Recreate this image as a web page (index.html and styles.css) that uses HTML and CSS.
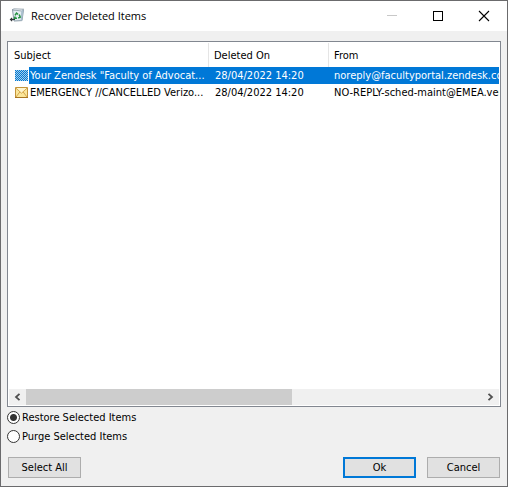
FILE: index.html
```html
<!DOCTYPE html>
<html lang="en">
<head>
<meta charset="utf-8">
<title>Recover Deleted Items</title>
<link rel="stylesheet" href="styles.css">
</head>
<body>
<main class="window">
  <header class="titlebar">
    <svg class="app-icon" viewBox="0 0 16 16" aria-hidden="true">
      <path d="M3.5 1.8 14.5 1.8 13 12.6 5 13z" fill="#e4edf2" stroke="#8b9ba7"/>
      <path d="M3 1.8 5 .8 14.6 1.2 12.5 3z" fill="#f8fbfd" stroke="#8b9ba7" stroke-width=".8"/>
      <path d="M12.3 3 14.5 1.8 13 12.6 11.5 12.8z" fill="#a9bfce"/>
      <path d="M6 7.4 7.5 5.2 9 6.4M10.2 6.6 11.2 9.2 9.2 10M8 10.2H5.6L6.2 8.4" fill="none" stroke="#24913f" stroke-width="1.5"/>
      <path d="M6 11.5H1.5M3.2 9.8 1.5 11.5 3.2 13.2" fill="none" stroke="#30363a" stroke-width="1.2"/>
    </svg>
    <h1 class="title">Recover Deleted Items</h1>
    <button class="caption" type="button" aria-label="Minimize" disabled>
      <svg viewBox="0 0 12 12" shape-rendering="crispEdges"><path d="M1 5.5H11" stroke="#c8c8c8"/></svg>
    </button>
    <button class="caption" type="button" aria-label="Maximize">
      <svg viewBox="0 0 12 12" shape-rendering="crispEdges"><path d="M1.5 1.5H10.5V10.5H1.5z" fill="none" stroke="#000"/></svg>
    </button>
    <button class="caption" type="button" aria-label="Close">
      <svg viewBox="0 0 12 12"><path d="M1 1 11 11M11 1 1 11" stroke="#000" stroke-width="1.1"/></svg>
    </button>
  </header>
  <form class="content">
    <section class="list">
      <table class="items">
        <colgroup><col class="col-subject"><col class="col-date"><col></colgroup>
        <thead>
          <tr><th>Subject</th><th>Deleted On</th><th>From</th></tr>
        </thead>
        <tbody>
          <tr class="selected">
            <td><div class="subject">
              <svg class="mail" viewBox="0 0 13 11" aria-hidden="true">
                <path d="M0 0h13v11H0z" fill="#a8cfe6"/>
                <path d="M0 .5h13M0 2.5h13M0 4.5h13M0 6.5h13M0 8.5h13M0 10.5h13" stroke="#0078d7" stroke-dasharray="1 1"/>
                <path d="M1 1.5h12M1 3.5h12M1 5.5h12M1 7.5h12M1 9.5h12" stroke="#0078d7" stroke-dasharray="1 1"/>
              </svg>
              <span class="text">Your Zendesk "Faculty of Advocat...</span>
            </div></td>
            <td>28/04/2022 14:20</td>
            <td>noreply@facultyportal.zendesk.co</td>
          </tr>
          <tr>
            <td><div class="subject">
              <svg class="mail" viewBox="0 0 13 11" aria-hidden="true">
                <path d="M.5.5h12v10H.5z" fill="#fbe69a" stroke="#c4943a"/>
                <path d="M1 1h11L6.5 6.2z" fill="#fff6cf"/>
                <path d="M1 1.2 6.5 6.2 12 1.2M1 10 4.8 5M12 10 8.2 5" fill="none" stroke="#cf9f45" stroke-width=".9"/>
                <path d="M0 10.5h13" stroke="#a87522"/>
              </svg>
              <span class="text">EMERGENCY //CANCELLED Verizo...</span>
            </div></td>
            <td>28/04/2022 14:20</td>
            <td>NO-REPLY-sched-maint@EMEA.ver</td>
          </tr>
        </tbody>
      </table>
      <div class="scrollbar">
        <button class="arrow" type="button" aria-label="Scroll left"><svg viewBox="0 0 7 8"><path d="M5.5.8 2 4 5.5 7.2" fill="none" stroke="#505050" stroke-width="1.8"/></svg></button>
        <div class="track"><div class="thumb"></div></div>
        <button class="arrow" type="button" aria-label="Scroll right"><svg viewBox="0 0 7 8"><path d="M1.5.8 5 4 1.5 7.2" fill="none" stroke="#505050" stroke-width="1.8"/></svg></button>
      </div>
    </section>
    <div class="options">
      <label class="option"><input type="radio" name="action" checked>Restore Selected Items</label>
      <label class="option"><input type="radio" name="action">Purge Selected Items</label>
    </div>
    <footer class="actions">
      <button class="button" type="button">Select All</button>
      <span class="spacer"></span>
      <button class="button primary" type="button">Ok</button>
      <button class="button" type="button">Cancel</button>
    </footer>
  </form>
</main>
</body>
</html>
```
FILE: styles.css
```css
* {
  box-sizing: border-box;
}

body {
  margin: 0;
  font: 11px/17px "DejaVu Sans Condensed", "DejaVu Sans", sans-serif;
  color: #000;
}

button {
  font: inherit;
  color: inherit;
  padding: 0;
  border: 0;
  background: none;
}

.window {
  display: flex;
  flex-direction: column;
  min-height: 100vh;
  border: 1px solid #6b6b6d;
  background: #f0f0f0;
}

.titlebar {
  display: flex;
  align-items: center;
  height: 30px;
  padding-left: 8px;
  background: #fff;
}

.app-icon {
  width: 16px;
  height: 16px;
}

.title {
  flex: 1;
  margin: 0 0 0 6px;
  font: 11px/16px "Open Sans", "Noto Sans", sans-serif;
}

.caption {
  display: grid;
  place-items: center;
  width: 46px;
  height: 28px;
}

.caption svg {
  width: 12px;
  height: 12px;
}

.content {
  display: flex;
  flex: 1;
  flex-direction: column;
  padding: 10px 6px 8px;
}

.list {
  display: flex;
  flex: 1;
  flex-direction: column;
  justify-content: space-between;
  padding: 1px;
  border: 1px solid #828790;
  background: #fff;
}

.items {
  width: 100%;
  table-layout: fixed;
  border-collapse: separate;
  border-spacing: 0;
}

.col-subject {
  width: 200px;
}

.col-date {
  width: 120px;
}

.items th {
  height: 24px;
  padding: 0 5px;
  border-right: 1px solid #e5e5e5;
  font-weight: normal;
  text-align: left;
}

.items th:last-child {
  border-right: 0;
}

.items td {
  height: 17px;
  padding: 1px 0 0 6px;
  overflow: hidden;
  line-height: 16px;
  white-space: nowrap;
}

.items td:first-child {
  padding-top: 0;
}

.items td:last-child {
  padding-left: 5px;
}

.subject {
  display: flex;
  align-items: center;
  gap: 1px;
}

.mail {
  flex: none;
  width: 13px;
  height: 11px;
}

.text {
  flex: 1;
  padding: 1px 0 0 1px;
}

.selected td + td,
.selected .text {
  background: #0078d7;
  color: #fff;
}

.scrollbar {
  display: flex;
  height: 16px;
  background: #f0f0f0;
}

.arrow {
  display: grid;
  place-items: center;
  width: 17px;
}

.arrow svg {
  width: 7px;
  height: 8px;
}

.track {
  display: flex;
  flex: 1;
}

.thumb {
  width: 58.4%;
  background: #cdcdcd;
}

.options {
  display: flex;
  flex-direction: column;
  gap: 2px;
  padding: 2px 0;
}

.option {
  display: flex;
  align-items: center;
  gap: 2px;
}

.option input {
  appearance: none;
  width: 13px;
  height: 13px;
  margin: 0;
  border: 1px solid #333;
  border-radius: 50%;
  background: #fff;
}

.option input:checked {
  background: radial-gradient(circle, #333 3px, #fff 4px);
}

.actions {
  display: flex;
  gap: 11px;
  padding: 10px 1px 0;
}

.spacer {
  flex: 1;
}

.button {
  width: 73px;
  height: 21px;
  border: 1px solid #adadad;
  background: #e1e1e1;
}

.primary {
  border: 2px solid #0078d7;
}
```
